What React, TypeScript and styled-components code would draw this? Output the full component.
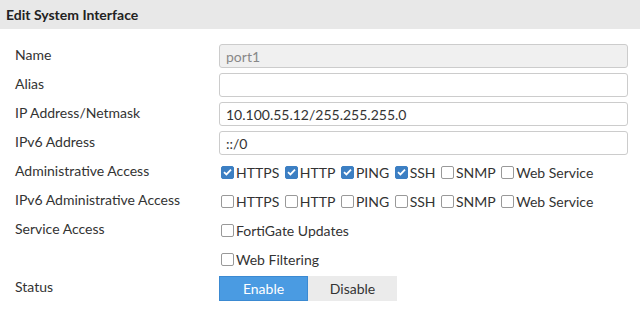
import React, { useState } from "react";
import styled, { createGlobalStyle } from "styled-components";

const Global = createGlobalStyle`
  html, body { margin: 0; padding: 0; background: #fff; }
  body { font-family: Lato, "Open Sans", sans-serif; color: #333; }
`;

const Page = styled.div`
  width: 640px;
  height: 320px;
  overflow: hidden;
  background: #fff;
`;

const Header = styled.div`
  height: 29px;
  display: flex;
  align-items: center;
  padding-left: 6px;
  background: #e8e8e8;
  font-weight: 700;
  font-size: 14px;
  color: #222;
`;

const Form = styled.div`
  display: grid;
  grid-template-columns: 204px 409px;
  row-gap: 5px;
  padding: 15px 0 0 15px;
`;

const Label = styled.div`
  box-sizing: border-box;
  height: 24px;
  padding-bottom: 3px;
  display: flex;
  align-items: center;
  font-size: 14px;
  color: #333;
`;

const Field = styled.div`
  display: flex;
  flex-direction: column;
  gap: 5px;
`;

const TextBox = styled.input<{ $disabled?: boolean }>`
  box-sizing: border-box;
  width: 100%;
  height: 24px;
  padding: 0 6px;
  border: 1px solid #ccc;
  border-radius: 3px;
  background: ${(p) => (p.$disabled ? "#f0f0f0" : "#fff")};
  color: ${(p) => (p.$disabled ? "#888" : "#333")};
  font-family: Lato, sans-serif;
  font-size: 14px;
  outline: none;
`;

const CheckRow = styled.div`
  height: 24px;
  display: flex;
  align-items: center;
  gap: 5.5px;
  padding-left: 2px;
`;

const CheckItem = styled.label`
  display: flex;
  align-items: center;
  gap: 2px;
  font-size: 14px;
  color: #333;
  cursor: pointer;
`;

const Box = styled.span<{ $on: boolean }>`
  box-sizing: border-box;
  width: 13px;
  height: 13px;
  border-radius: 2px;
  display: flex;
  align-items: center;
  justify-content: center;
  background: ${(p) => (p.$on ? "#3c7fc3" : "#fff")};
  border: ${(p) => (p.$on ? "1px solid #3c7fc3" : "1.5px solid #999")};
`;

const Toggle = styled.div`
  display: flex;
  height: 25px;
  width: 178px;
`;

const ToggleButton = styled.button<{ $active: boolean }>`
  flex: 1;
  box-sizing: border-box;
  border: 1px solid ${(p) => (p.$active ? "#3b8ad2" : "#ebebeb")};
  background: ${(p) => (p.$active ? "#4a9be2" : "#ebebeb")};
  color: ${(p) => (p.$active ? "#fff" : "#333")};
  font-family: Lato, sans-serif;
  font-size: 14px;
  padding: 0;
  cursor: pointer;
`;

function Check({ on, label }: { on: boolean; label: string }) {
  return (
    <CheckItem>
      <Box $on={on}>
        {on && (
          <svg width="9" height="8" viewBox="0 0 9 8">
            <path d="M1 4.2 L3.4 6.4 L8 1.6" fill="none" stroke="#fff" strokeWidth="1.8" />
          </svg>
        )}
      </Box>
      {label}
    </CheckItem>
  );
}

const services = ["HTTPS", "HTTP", "PING", "SSH", "SNMP", "Web Service"];

export default function App() {
  const [enabled, setEnabled] = useState(true);
  const admin = ["HTTPS", "HTTP", "PING", "SSH"];
  return (
    <Page>
      <Global />
      <Header>Edit System Interface</Header>
      <Form>
        <Label>Name</Label>
        <Field>
          <TextBox $disabled readOnly value="port1" />
        </Field>
        <Label>Alias</Label>
        <Field>
          <TextBox defaultValue="" />
        </Field>
        <Label>IP Address/Netmask</Label>
        <Field>
          <TextBox defaultValue="10.100.55.12/255.255.255.0" />
        </Field>
        <Label>IPv6 Address</Label>
        <Field>
          <TextBox defaultValue="::/0" />
        </Field>
        <Label>Administrative Access</Label>
        <Field>
          <CheckRow>
            {services.map((s) => (
              <Check key={s} on={admin.includes(s)} label={s} />
            ))}
          </CheckRow>
        </Field>
        <Label>IPv6 Administrative Access</Label>
        <Field>
          <CheckRow>
            {services.map((s) => (
              <Check key={s} on={false} label={s} />
            ))}
          </CheckRow>
        </Field>
        <Label>Service Access</Label>
        <Field>
          <CheckRow>
            <Check on={false} label="FortiGate Updates" />
          </CheckRow>
          <CheckRow>
            <Check on={false} label="Web Filtering" />
          </CheckRow>
        </Field>
        <Label>Status</Label>
        <Field>
          <Toggle>
            <ToggleButton $active={enabled} onClick={() => setEnabled(true)}>
              Enable
            </ToggleButton>
            <ToggleButton $active={!enabled} onClick={() => setEnabled(false)}>
              Disable
            </ToggleButton>
          </Toggle>
        </Field>
      </Form>
    </Page>
  );
}
